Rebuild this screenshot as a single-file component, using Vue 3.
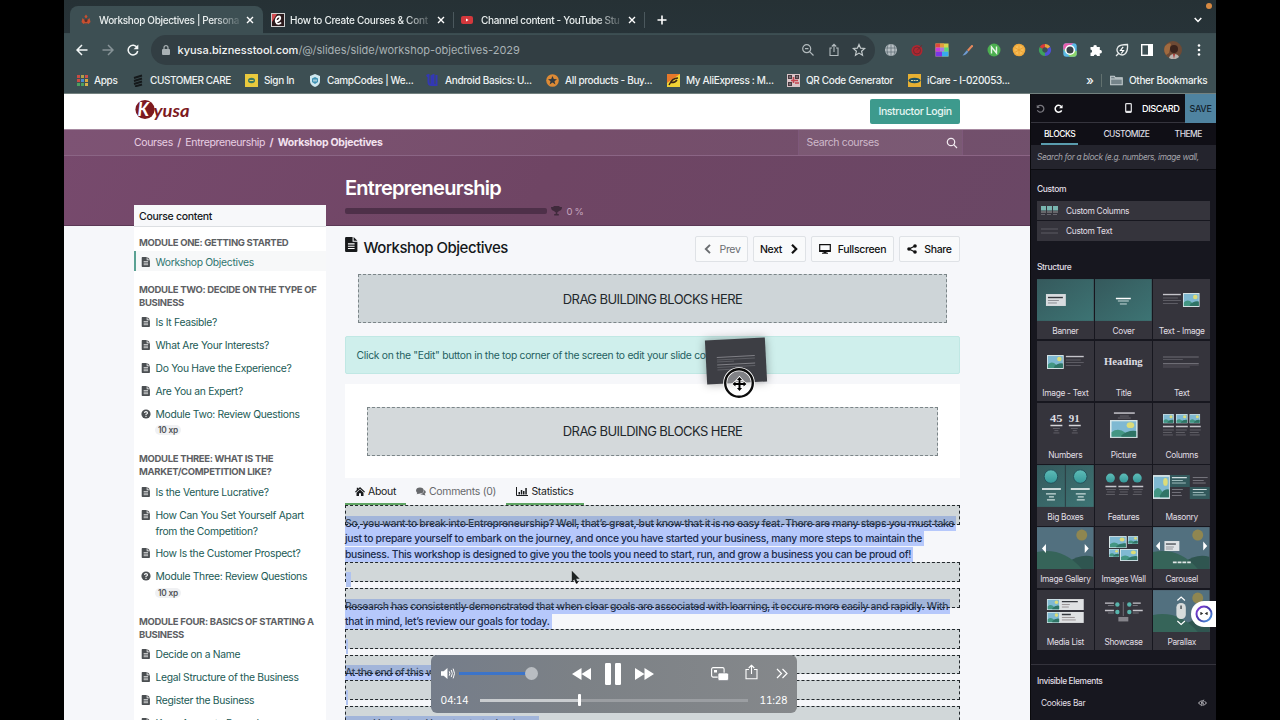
<script setup>
const bookmarks = [
  { icon: 'apps', text: 'Apps' },
  { icon: 'stack', text: 'CUSTOMER CARE' },
  { icon: 'mtn', text: 'Sign In' },
  { icon: 'shield', text: 'CampCodes | We...' },
  { icon: 'udacity', text: 'Android Basics: U...' },
  { icon: 'badge', text: 'All products - Buy...' },
  { icon: 'ali', text: 'My AliExpress : M...' },
  { icon: 'qr', text: 'QR Code Generator' },
  { icon: 'mtn2', text: 'iCare - I-020053...' },
]

const modules = [
  { title: ['MODULE ONE: GETTING STARTED'], items: [{ t: ['Workshop Objectives'], active: true }] },
  {
    title: ['MODULE TWO: DECIDE ON THE TYPE OF', 'BUSINESS'],
    items: [
      { t: ['Is It Feasible?'] },
      { t: ['What Are Your Interests?'] },
      { t: ['Do You Have the Experience?'] },
      { t: ['Are You an Expert?'] },
      { t: ['Module Two: Review Questions'], quiz: true },
    ],
  },
  {
    title: ['MODULE THREE: WHAT IS THE', 'MARKET/COMPETITION LIKE?'],
    items: [
      { t: ['Is the Venture Lucrative?'] },
      { t: ['How Can You Set Yourself Apart', 'from the Competition?'] },
      { t: ['How Is the Customer Prospect?'] },
      { t: ['Module Three: Review Questions'], quiz: true },
    ],
  },
  {
    title: ['MODULE FOUR: BASICS OF STARTING A', 'BUSINESS'],
    items: [
      { t: ['Decide on a Name'] },
      { t: ['Legal Structure of the Business'] },
      { t: ['Register the Business'] },
      { t: ['Keep Accurate Records'] },
    ],
  },
]

const blocks = [
  'Banner', 'Cover', 'Text - Image', 'Image - Text', 'Title', 'Text', 'Numbers', 'Picture', 'Columns',
  'Big Boxes', 'Features', 'Masonry', 'Image Gallery', 'Images Wall', 'Carousel', 'Media List', 'Showcase', 'Parallax',
]
</script>

<template>
  <div class="stage">
    <svg class="defs" aria-hidden="true">
      <defs>
        <linearGradient id="teal" x1="0" y1="0" x2="1" y2="1">
          <stop offset="0" stop-color="#35595c" /><stop offset="1" stop-color="#3d7474" />
        </linearGradient>
        <linearGradient id="orb" x1="0" y1="0" x2="0" y2="1">
          <stop offset="0" stop-color="#5fbdb8" /><stop offset="1" stop-color="#35999a" />
        </linearGradient>
        <linearGradient id="ring" x1="0" y1="0" x2="1" y2="1">
          <stop offset="0" stop-color="#8a3fe0" /><stop offset=".5" stop-color="#4437a8" /><stop offset="1" stop-color="#4aa6e8" />
        </linearGradient>
        <symbol id="photo" viewBox="0 0 17 14" preserveAspectRatio="none">
          <rect width="17" height="14" fill="#d9e8ea" />
          <rect x="1" y="1" width="15" height="12" fill="#7fb9d2" />
          <circle cx="12.5" cy="4" r="2.3" fill="#dcdc79" />
          <path d="M1 9.5Q5 5.500 9.500 10L16 9v4H1z" fill="#439683" />
          <path d="M7 12Q11 7.500 16 8.500V13H7z" fill="#2f7466" />
        </symbol>
        <symbol id="scene" viewBox="0 0 57 42" preserveAspectRatio="none">
          <rect width="57" height="42" fill="#52707f" />
          <circle cx="45" cy="8" r="5.500" fill="#8f8650" />
          <path d="M30 36Q44 26 57 30V42H30z" fill="#2f5550" />
          <path d="M0 25Q26 20 45 42H0z" fill="#366459" />
        </symbol>
        <symbol id="file" viewBox="0 0 12 14">
          <path d="M1 0h6v4.500h4.500V13a1 1 0 0 1-1 1H1a1 1 0 0 1-1-1V1a1 1 0 0 1 1-1z" fill="currentColor" />
          <path d="M8 0l3.500 3.600H8z" fill="currentColor" />
          <path d="M2.700 6.400h6.200M2.700 8.600h6.200M2.700 10.800h6.200" stroke="#fff" stroke-width="1" />
        </symbol>
        <symbol id="lines" viewBox="0 0 37 13">
          <path d="M0 1h36M0 7.500h36" stroke="#6e6d75" stroke-width="1.200" />
          <path d="M0 3.500h20M0 11h27M0 9h36" stroke="#56555d" stroke-width="1" />
        </symbol>
      </defs>
    </svg>

    <div class="screen">
      <div class="tabstrip">
        <div class="tab active">
          <svg class="fav" viewBox="0 0 12 12"><path d="M6 .5l1.600 2.300L6 4.600 4.400 2.800zM2.500 4l2 2 1.500-1 1.500 1 2-2 1 4-2 2-2-1.200L6 11 5.500 8.800 3.500 10l-2-2z" fill="#c94f2f" /><circle cx="6" cy="6.500" r="1.500" fill="#5b2b27" /></svg>
          <span class="tab-text t1">Workshop Objectives | Persona</span>
          <svg class="x" viewBox="0 0 8 8"><path d="M1 1l6 6M7 1L1 7" /></svg>
        </div>
        <div class="tab second">
          <svg class="fav big" viewBox="0 0 14 14"><rect width="14" height="14" fill="#cfcfcf" /><rect x="1" y="1" width="12" height="12" fill="#2c1a1c" /><path d="M1 1h5L1 9z" fill="#d24b50" /><path d="M5 8.500c5-1 5-5 3-5S4 6 5 9s4 2 5 .500" fill="none" stroke="#fff" stroke-width="1.800" /></svg>
          <span class="tab-text t2">How to Create Courses &amp; Cont</span>
          <svg class="x" viewBox="0 0 8 8"><path d="M1 1l6 6M7 1L1 7" /></svg>
        </div>
        <div class="tab third">
          <svg class="fav" viewBox="0 0 12 12"><rect y="2" width="12" height="8" rx="2" fill="#d3383c" /><path d="M5 4.400v3.200L7.600 6z" fill="#fff" /></svg>
          <span class="tab-text t3">Channel content - YouTube Stu</span>
          <svg class="x" viewBox="0 0 8 8"><path d="M1 1l6 6M7 1L1 7" /></svg>
        </div>
        <svg class="plus" viewBox="0 0 10 10"><path d="M5 .5v9M.5 5h9" stroke="#fff" stroke-width="1.600" /></svg>
        <svg class="chev" viewBox="0 0 8 6"><path d="M.7 1L4 4.500 7.300 1" fill="none" stroke="#fff" stroke-width="1.500" /></svg>
        <i class="rec"></i>
      </div>

      <div class="toolbar">
        <svg class="nav" viewBox="0 0 12 12"><path d="M11.500 6H1.200M6 1L1 6l5 5" /></svg>
        <svg class="nav dim" viewBox="0 0 12 12"><path d="M.5 6h10.300M6 1l5 5-5 5" /></svg>
        <svg class="nav" viewBox="0 0 12 12"><path d="M10.200 3.800A4.800 4.800 0 1 0 10.700 7" /><path d="M11.300.5v4.700H6.600z" class="solid" /></svg>
        <div class="omni">
          <svg class="lock" viewBox="0 0 8 10"><rect y="4" width="8" height="6" rx="1" fill="#a9b1b4" /><path d="M2 4.500V2.700a2 2 0 0 1 4 0v1.800" fill="none" stroke="#a9b1b4" stroke-width="1.200" /></svg>
          <span class="url"><b>kyusa.biznesstool.com</b>/@/slides/slide/workshop-objectives-2029</span>
        </div>
        <div class="exts">
          <svg viewBox="0 0 14 14"><g fill="none" stroke="#b2babd" stroke-width="1.200"><circle cx="5.700" cy="5.700" r="4" /><path d="M8.600 8.600L12.500 12.500M4 5.700h3.400" /></g></svg>
          <svg viewBox="0 0 14 14"><g fill="none" stroke="#b2babd" stroke-width="1.100"><path d="M5 5H3v7.500h8V5H9M7 9V1.500M4.800 3.500L7 1.300l2.200 2.200" /></g></svg>
          <svg viewBox="0 0 14 14"><path d="M7 1.500l1.600 3.700 4 .3-3 2.700.9 4L7 10.100l-3.500 2.100.9-4-3-2.700 4-.3z" fill="none" stroke="#c3cacc" stroke-width="1.200" /></svg>
          <svg viewBox="0 0 14 14"><circle cx="7" cy="7" r="6" fill="#b9c1c5" /><path d="M1 5h12M1 9h12M7 1v12M4 1.500Q2 7 4 12.500M10 1.500Q12 7 10 12.500" fill="none" stroke="#66757b" stroke-width=".8" /></svg>
          <svg viewBox="0 0 14 14"><circle cx="7" cy="7.500" r="5.500" fill="#b0262f" /><circle cx="7" cy="7.500" r="3.500" fill="none" stroke="#702a33" /><path d="M7 7.500l5-5.500" stroke="#702a33" /></svg>
          <svg viewBox="0 0 14 14"><rect x=".5" y=".5" width="13" height="13" fill="#d5d64e" /><path d="M.5.5H5v4H.5z" fill="#e0493c" /><path d="M5 .5h4v4H5z" fill="#e59a3e" /><path d="M.5 4.500H5v4H.5z" fill="#c83ddb" /><path d="M5 4.500h4.300v4H5z" fill="#a57be6" /><path d="M9.300 4.500h4.200v4H9.300z" fill="#58d97c" /><path d="M.5 8.500h6.500v5H.5z" fill="#7b35e8" /><path d="M7 8.500h6.500v5H7z" fill="#38a9ee" /></svg>
          <svg viewBox="0 0 14 14"><path d="M6 7L10.500 2Q12.500 1.500 12 3.500L7.500 8.500z" fill="#e4875c" /><path d="M5.800 7.200l1.600 1.600Q5 12.500 1.500 12.500z" fill="#6f9bd0" /></svg>
          <svg viewBox="0 0 14 14"><circle cx="7" cy="7" r="6.500" fill="#4caf50" /><path d="M4.500 10.500V4l5 6V3.500" fill="none" stroke="#e8f6e9" stroke-width="1.400" /></svg>
          <svg viewBox="0 0 14 14"><circle cx="7" cy="7" r="6.300" fill="#f0a83a" /><circle cx="7" cy="7" r="4.800" fill="#f6bc55" /><path d="M7 2.500v9M3 4.700l8 4.600M11 4.700L3 9.300" stroke="#e79b2c" stroke-width=".8" /></svg>
          <svg viewBox="0 0 14 14"><g fill="none" stroke-width="3.400"><path d="M7 2.600A4.400 4.400 0 0 1 10.800 4.800" stroke="#e8a13c" /><path d="M10.800 4.800A4.400 4.400 0 0 1 7 11.400" stroke="#4f4fd6" /><path d="M7 11.400A4.400 4.400 0 0 1 3.200 4.800" stroke="#3fa15c" /><path d="M3.200 4.800A4.400 4.400 0 0 1 7 2.600" stroke="#d93a3a" /></g></svg>
          <svg viewBox="0 0 14 14"><rect x=".3" y=".3" width="13.400" height="13.400" rx="3" fill="#5ab9e6" /><path d="M.3 7V3.300a3 3 0 0 1 3-3h7.400z" fill="#e85fae" /><path d="M.3 6.500L13.700 8v2.700a3 3 0 0 1-3 3H7z" fill="#8bd46a" /><circle cx="7" cy="7" r="4.300" fill="#39424a" stroke="#fff" stroke-width="1.500" /></svg>
          <svg viewBox="0 0 14 14"><path d="M1.500 4h3a1.700 1.700 0 1 1 3.300 0h3v3a1.700 1.700 0 1 1 0 3.300v2.700H8a1.600 1.600 0 0 0-3.200 0H1.500V9.800a1.600 1.600 0 0 0 0-3.200z" fill="#fff" /></svg>
          <svg viewBox="0 0 14 14"><path d="M12.500 1.500Q13 8 10.500 10.500A5 5 0 0 1 3 4Q5 1.500 12.500 1.500zM1 13l2.500-2.500" fill="none" stroke="#e8ecec" stroke-width="1.300" /><path d="M8.200 3.800L5.500 7.500h3L6.300 10.500" fill="none" stroke="#fff" stroke-width="1.200" /></svg>
          <svg viewBox="0 0 14 14"><rect x="1.700" y="1.700" width="10.600" height="10.600" fill="none" stroke="#fff" stroke-width="1.400" /><path d="M8 1.700h4.300v10.600H8z" fill="#fff" /></svg>
          <svg class="ava" viewBox="0 0 18 18"><circle cx="9" cy="9" r="9" fill="#6e4a35" /><path d="M2 14A9 9 0 0 1 1 5q4-4 6-2l-2 9z" fill="#a06a3f" /><circle cx="10" cy="8" r="4" fill="#3a231c" /><path d="M5 17q1-4 5-4t5 3q-5 4-10 1z" fill="#b9b3ae" /><path d="M9 13l1 5 1-5z" fill="#a33" /></svg>
          <svg viewBox="0 0 14 14"><g fill="#fff"><circle cx="7" cy="2.500" r="1.300" /><circle cx="7" cy="7" r="1.300" /><circle cx="7" cy="11.500" r="1.300" /></g></svg>
        </div>
      </div>

      <div class="bookmarks">
        <div v-for="b in bookmarks" :key="b.icon" class="bm" :class="b.icon">
          <svg viewBox="0 0 13 13">
            <template v-if="b.icon === 'apps'">
              <path d="M1 2.500h3M1 6.500h3" stroke="#c94b43" stroke-width="3" /><path d="M5 2.500h3" stroke="#b0a04a" stroke-width="3" /><path d="M9 2.500h3" stroke="#d0504a" stroke-width="3" /><path d="M5 6.500h3" stroke="#4a8ad0" stroke-width="3" /><path d="M9 6.500h3" stroke="#d9a33c" stroke-width="3" /><path d="M1 10.500h3M5 10.500h3" stroke="#4aa060" stroke-width="3" /><path d="M9 10.500h3" stroke="#d9b04a" stroke-width="3" />
            </template>
            <path v-else-if="b.icon === 'stack'" d="M1 4l8-2.500M1 7l8-2.500M1 10l8-2.500M2 12.500L9 10.500" stroke="#15191b" stroke-width="1.900" />
            <template v-else-if="b.icon === 'mtn'">
              <rect width="13" height="13" fill="#eac93d" /><ellipse cx="6.500" cy="6.500" rx="3.500" ry="2.800" fill="#3e7860" /><path d="M4.500 6.500h4" stroke="#e9d35c" />
            </template>
            <template v-else-if="b.icon === 'shield'">
              <path d="M1 2l5-2 5 2v5q0 4-5 6-5-2-5-6z" fill="#cfe8f0" /><path d="M3 4.500l3-1.500 3 1.500V8L6 10 3 8z" fill="#3f93b4" /><path d="M5 5.500v2M7 5.500v2" stroke="#fff" />
            </template>
            <path v-else-if="b.icon === 'udacity'" d="M1.500 2l2-1v7q0 3 3 3V2l2-1v10h3V1" fill="none" stroke="#3338b4" stroke-width="2" />
            <template v-else-if="b.icon === 'badge'">
              <circle cx="6.500" cy="6.500" r="6.300" fill="#dd8a35" /><path d="M6.500 2l1.300 3 3.200.2-2.500 2 .9 3.200-2.900-1.800-2.900 1.800.9-3.200-2.500-2L5.200 5z" fill="#323a40" />
            </template>
            <template v-else-if="b.icon === 'ali'">
              <rect width="13" height="13" fill="#f0d235" /><path d="M0 0h13L0 9z" fill="#e7782a" /><path d="M2 11Q5 4 11 4M3 8.500Q8 9 10 6" fill="none" stroke="#3a2417" stroke-width="1.400" />
            </template>
            <template v-else-if="b.icon === 'qr'">
              <rect width="13" height="13" fill="#d9c3c6" /><path d="M1 1h4v4H1zM8 1h4v4H8zM1 8h4v4H1z" fill="#4a3a40" /><path d="M2.500 2.500h1v1h-1zM9.500 2.500h1v1h-1zM2.500 9.500h1v1h-1z" fill="#fff" /><path d="M4 6.500h7M6.500 3v6M8 9h4" stroke="#c74650" stroke-width="1.600" />
            </template>
            <template v-else>
              <rect width="13" height="13" fill="#e6b032" /><ellipse cx="6.500" cy="6.500" rx="6" ry="2.800" fill="#1f4e60" /><path d="M3 6.500h7" stroke="#dcd9a0" stroke-width="1.200" stroke-dasharray="2 .6" />
            </template>
          </svg>
          <span>{{ b.text }}</span>
        </div>
        <span class="more">»</span>
        <div class="bm other">
          <svg viewBox="0 0 14 11"><path d="M.7 10V1h4l1 1.500h7.500V10zM.7 4h12.500" fill="#75848a" stroke="#c8d0d2" stroke-width="1.100" /></svg>
          <span>Other Bookmarks</span>
        </div>
      </div>

      <div class="body">
        <div class="page">
          <header class="site">
            <svg class="logo" viewBox="0 0 60 28">
              <circle cx="11" cy="10.500" r="9.600" fill="#7d1a1e" />
              <text x="3.500" y="17" class="k">K</text>
              <text x="19.500" y="18" class="yusa" textLength="36" lengthAdjust="spacingAndGlyphs">yusa</text>
            </svg>
            <a class="login">Instructor Login</a>
          </header>

          <section class="hero">
            <div class="crumbs">
              <div class="trail"><span>Courses</span><i>/</i><span>Entrepreneurship</span><i class="bold">/</i><b>Workshop Objectives</b></div>
              <div class="search">Search courses
                <svg viewBox="0 0 12 12"><circle cx="5" cy="5" r="3.700" fill="none" stroke="#f3ebf1" stroke-width="1.200" /><path d="M7.700 7.700l3.300 3.300" stroke="#f3ebf1" stroke-width="1.200" /></svg>
              </div>
            </div>
            <h1>Entrepreneurship</h1>
            <div class="progress">
              <i></i>
              <svg viewBox="0 0 11 10"><path d="M2.500 0h6v1H11q0 3.500-3 4-.7 1-1.700 1.300V8h1.500v1.500H3.200V8h1.500V6.300Q3.700 6 3 5 0 4.500 0 1h2.500z" fill="#402a3c" /></svg>
              <span>0 %</span>
            </div>
          </section>

          <div class="columns">
            <aside>
              <div class="aside-head">Course content</div>
              <div v-for="m in modules" :key="m.title[0]" class="module">
                <h3><span v-for="l in m.title" :key="l">{{ l }}</span></h3>
                <template v-for="it in m.items" :key="it.t[0]">
                  <div class="lesson" :class="{ current: it.active }">
                    <svg v-if="it.quiz" viewBox="0 0 10 10"><circle cx="5" cy="5" r="4.600" fill="#4b4f52" /><path d="M3.500 4Q3.600 2.600 5 2.600T6.500 4Q6.500 4.800 5 5.300v.8M5 6.800v1.200" fill="none" stroke="#fff" stroke-width="1.100" /></svg>
                    <svg v-else class="doc"><use href="#file" /></svg>
                    <div><span v-for="l in it.t" :key="l">{{ l }}</span></div>
                  </div>
                  <div v-if="it.quiz" class="xp"><span>10 xp</span></div>
                </template>
              </div>
            </aside>

            <main>
              <div class="titlebar">
                <svg class="bigdoc"><use href="#file" /></svg>
                <h2>Workshop Objectives</h2>
                <a class="btn prev"><svg viewBox="0 0 10 10"><path d="M7 .8L2.800 5 7 9.200" fill="none" stroke="currentColor" stroke-width="1.900" /></svg>Prev</a>
                <a class="btn next">Next<svg viewBox="0 0 10 10"><path d="M3 .8L7.200 5 3 9.200" fill="none" stroke="currentColor" stroke-width="2.200" /></svg></a>
                <a class="btn full"><svg viewBox="0 0 12 10"><path d="M.7.700h10.600v6.600H.7z" fill="none" stroke="currentColor" stroke-width="1.200" /><path d="M.5 6h11v1.500h-11zM4.500 7h3v1.700H9v1H3v-1h1.500z" fill="currentColor" /></svg>Fullscreen</a>
                <a class="btn share"><svg viewBox="0 0 10 10"><path d="M8 2L2 5l6 3" fill="none" stroke="currentColor" stroke-width="1.300" /><g fill="currentColor"><circle cx="8" cy="2" r="1.800" /><circle cx="2" cy="5" r="1.800" /><circle cx="8" cy="8" r="1.800" /></g></svg>Share</a>
              </div>
              <div class="drop one">DRAG BUILDING BLOCKS HERE</div>
              <div class="alert">Click on the "Edit" button in the top corner of the screen to edit your slide content.</div>
              <div class="canvas"><div class="drop two">DRAG BUILDING BLOCKS HERE</div></div>
              <nav class="tabs">
                <a class="on about"><svg viewBox="0 0 10 9"><path d="M5 0L10 4.700 9.200 5.500 5 1.700.8 5.500 0 4.700 1.800 3V.8h1.500v1zM5 2.600l3.500 3.100V9H6V6.300H4V9H1.500V5.700z" fill="currentColor" /></svg>About</a>
                <a class="cmt"><svg viewBox="0 0 11 9"><ellipse cx="4.300" cy="3.300" rx="4.200" ry="3.200" fill="currentColor" /><path d="M2 5l-1.300 2.500L5 6.300z" fill="currentColor" /><path d="M9.200 2.500q3 2.500.3 4.500l1 1.800L7.500 8Q5.500 8 4.500 7.200 9 7 9.200 2.500z" fill="currentColor" /></svg>Comments (0)</a>
                <a class="on stats"><svg viewBox="0 0 12 9"><path d="M.5 0v8.500H12" fill="none" stroke="currentColor" /><path d="M2.500 5H4v2.500H2.500zM4.800 3h1.500v4.500H4.800zM7 4h1.500v3.500H7zM9.300 1h1.500v6.500H9.300z" fill="currentColor" /></svg>Statistics</a>
              </nav>
              <div class="article">
                <div class="zone"></div>
                <p class="over"><mark class="l1">So, you want to break into Entrepreneurship? Well, that’s great, but know that it is no easy feat. There are many steps you must take</mark><mark class="l2">just to prepare yourself to embark on the journey, and once you have started your business, many more steps to maintain the</mark><mark class="l3">business. This workshop is designed to give you the tools you need to start, run, and grow a business you can be proud of!</mark></p>
                <div class="zone z2"><i class="sliver"></i></div>
                <div class="zone z3"></div>
                <p class="over"><mark class="l4">Research has consistently demonstrated that when clear goals are associated with learning, it occurs more easily and rapidly. With</mark><mark class="l5">that in mind, let’s review our goals for today.</mark></p>
                <div class="zone z4"><i class="sliver thin"></i></div>
                <div class="zone z5"></div>
                <p class="over short"><mark class="l6">At the end of this workshop, you should be able to:</mark></p>
                <div class="zone z6"><i class="sliver thin"></i></div>
                <div class="zone z7"></div>
                <p class="over last"><mark class="l7">Understand how to start a business</mark></p>
              </div>
            </main>
          </div>
        </div>

        <div class="editor">
          <div class="ed-top">
            <svg viewBox="0 0 10 10" class="undo"><path d="M2 2.800A3.800 3.800 0 1 1 1.500 7" fill="none" stroke="#77767d" stroke-width="1.400" /><path d="M.8.800v3.600h3.600z" fill="#77767d" /></svg>
            <svg viewBox="0 0 10 10" class="redo"><path d="M8 2.800A3.800 3.800 0 1 0 8.500 7" fill="none" stroke="#fff" stroke-width="1.700" /><path d="M9.500.800v3.900H5.600z" fill="#fff" /></svg>
            <svg viewBox="0 0 7 10" class="phone"><rect x=".7" y=".7" width="5.600" height="8.600" rx=".8" fill="none" stroke="#e5e5e8" stroke-width="1.200" /><path d="M1 8.500h5" stroke="#e5e5e8" stroke-width="1.400" /></svg>
            <span class="discard">DISCARD</span><span class="save">SAVE</span>
          </div>
          <div class="ed-tabs"><span class="sel">BLOCKS</span><span>CUSTOMIZE</span><span>THEME</span></div>
          <div class="ed-search">Search for a block (e.g. numbers, image wall,</div>
          <div class="ed-body">
            <h4>Custom</h4>
            <div class="custom">
              <svg viewBox="0 0 18 10"><g fill="#79b5b0"><path d="M0 0h5v4.500H0zM6 0h5v4.500H6zM12 0h5v4.500h-5z" /></g><path d="M0 6h17" stroke="#999" stroke-dasharray="5 1" /><path d="M0 8.500h17" stroke="#66656d" stroke-dasharray="4 2" /></svg>Custom Columns
            </div>
            <div class="custom">
              <svg viewBox="0 0 18 10"><path d="M0 3h17M0 7h17" stroke="#5c5b63" /></svg>Custom Text
            </div>
            <h4 class="structure">Structure</h4>
            <div class="grid">
              <div v-for="b in blocks" :key="b" class="cell">
                <svg viewBox="0 0 57 42">
                  <template v-if="b === 'Banner'"><rect width="57" height="42" fill="url(#teal)" /><rect x="9" y="15" width="20" height="12" fill="#d8dcdf" /><path d="M11 18.500h15" stroke="#34373c" stroke-width="1.400" /><path d="M11 21.500h11M11 24h9" stroke="#8a8d92" /></template>
                  <template v-else-if="b === 'Cover'"><rect width="57" height="42" fill="url(#teal)" /><path d="M21 19.500h15" stroke="#fff" stroke-width="1.500" /><path d="M23 22h11M25 25h7" stroke="#c9dcdc" /></template>
                  <template v-else-if="b === 'Text - Image'"><path d="M10 15.500h18" stroke="#c5c4ca" stroke-width="1.400" /><path d="M10 19h15M10 21.500h18M10 24.500h15" stroke="#5f5e66" /><use href="#photo" x="30" y="14" width="17" height="14" /></template>
                  <template v-else-if="b === 'Image - Text'"><use href="#photo" x="10" y="14" width="17" height="14" /><path d="M29 15.500h18" stroke="#c5c4ca" stroke-width="1.400" /><path d="M29 19h15M29 21.500h18M29 24.500h15" stroke="#5f5e66" /></template>
                  <text v-else-if="b === 'Title'" x="9" y="24.500" class="serif" textLength="39" lengthAdjust="spacingAndGlyphs">Heading</text>
                  <use v-else-if="b === 'Text'" href="#lines" x="10" y="15" width="37" height="13" />
                  <template v-else-if="b === 'Numbers'"><text x="13" y="18.500" class="serif" textLength="12.500" lengthAdjust="spacingAndGlyphs">45</text><text x="32" y="18.500" class="serif" textLength="11" lengthAdjust="spacingAndGlyphs">91</text><path d="M13.500 22.500h12M32 22.500h12" stroke="#d4d3d8" stroke-width="1.300" /><path d="M16 25.500h7M17.500 27.700h4M16.500 30h6M34 25.500h7M36 27.700h4M35 30h6" stroke="#66656d" stroke-width=".9" /></template>
                  <template v-else-if="b === 'Picture'"><path d="M19 10h21" stroke="#c5c4ca" stroke-width="1.500" /><path d="M25 13h9M23 15h13" stroke="#66656d" /><use href="#photo" x="15" y="17" width="28" height="18" /></template>
                  <template v-else-if="b === 'Columns'"><use href="#photo" x="10" y="11" width="11" height="9.500" /><use href="#photo" x="23" y="11" width="12" height="9.500" /><use href="#photo" x="36.500" y="11" width="11" height="9.500" /><path d="M10 23.500h11M23 23.500h12M37 23.500h11" stroke="#c5c4ca" stroke-width="1.400" /><path d="M10 27h11M23 27h11M37 27h11M10 29.500h9M23 29.500h9M37 29.500h9M10 32h10M23 32h10M37 32h10" stroke="#66656d" stroke-width=".9" /></template>
                  <template v-else-if="b === 'Big Boxes'"><rect width="57" height="42" fill="url(#teal)" /><path d="M28.500 0v42" stroke="#2b3a41" /><circle cx="14" cy="11.500" r="6.800" fill="url(#orb)" stroke="#24525a" /><circle cx="43.500" cy="11.500" r="6.800" fill="url(#orb)" stroke="#24525a" /><path d="M5 24h19M34 24h19" stroke="#fff" stroke-width="1.600" /><path d="M9 29h10M12 32h5M10 35h8M39 29h10M41 32h6M40 35h8" stroke="#c9dcdc" stroke-width="1.300" /></template>
                  <template v-else-if="b === 'Features'"><circle cx="15.500" cy="13" r="4.500" fill="url(#orb)" /><circle cx="29" cy="13" r="4.500" fill="url(#orb)" /><circle cx="42.500" cy="13" r="4.500" fill="url(#orb)" /><path d="M10.500 21.500h11M23.500 21.500h11M37.500 21.500h11" stroke="#c5c4ca" stroke-width="1.300" /><path d="M11 24.500h10M24 24.500h10M38 24.500h10M12 27h8M25 27h8M39 27h8M11 29.500h9M24 29.500h9M38 29.500h9" stroke="#66656d" stroke-width=".9" /></template>
                  <template v-else-if="b === 'Masonry'"><path d="M17 10h20v12H17zM37 22h20v12H37z" fill="#33595c" /><use href="#photo" x="0" y="10" width="17" height="24" /><path d="M19 12.500h15M40 24.500h14" stroke="#cfdedf" stroke-width="1.200" /><path d="M19 15.500h11M19 18h14M40 27.500h11M40 30h13" stroke="#9fbcbc" /><path d="M40 12.500h15M40 15.500h11M40 18h13M19 24.500h11M19 27.500h9M19 30.500h10" stroke="#77767e" /></template>
                  <template v-else-if="b === 'Image Gallery'"><use href="#scene" width="57" height="42" /><path d="M9 17v9l-4-4.500zM48 17v9l4-4.500z" fill="#fff" /></template>
                  <template v-else-if="b === 'Images Wall'"><use href="#photo" x="14" y="9" width="18" height="12" /><use href="#photo" x="33" y="9" width="10.500" height="8" /><use href="#photo" x="14" y="22" width="10.500" height="8" /><use href="#photo" x="25" y="22" width="18.500" height="12" /></template>
                  <template v-else-if="b === 'Carousel'"><use href="#scene" width="57" height="42" /><rect x="11.500" y="14" width="15" height="10" fill="#dfe3e6" /><path d="M13 17h10" stroke="#43474d" stroke-width="1.300" /><path d="M13 20h8M13 22h7" stroke="#8a8d92" stroke-width=".9" /><path d="M7 14.500v9l-4-4.500zM50.500 14.500v9l4-4.500z" fill="#fff" /><path d="M20 35.500h18" stroke="#dfe6e6" stroke-width="1.600" stroke-dasharray="3.800 1" /></template>
                  <template v-else-if="b === 'Media List'"><g><rect x="10" y="9" width="37" height="11" fill="#dfe1e3" /><rect x="10" y="22" width="37" height="11" fill="#dfe1e3" /><use href="#photo" x="10" y="9" width="13" height="11" /><use href="#photo" x="10" y="22" width="13" height="11" /></g><path d="M25 11.500h16M25 24.500h9" stroke="#34373c" stroke-width="1.300" /><path d="M25 14.500h8M25 17h7M25 27.500h13M25 30h14" stroke="#9a9395" /></template>
                  <template v-else-if="b === 'Showcase'"><path d="M28.500 12v14" stroke="#66656d" stroke-width="1.200" /><g fill="#58b4ac"><circle cx="22.500" cy="14.500" r="2.200" /><circle cx="22.500" cy="22" r="2.200" /><circle cx="34.500" cy="14.500" r="2.200" /><circle cx="34.500" cy="22" r="2.200" /></g><path d="M10 13h9M10 20.500h9M38 13h8M38 20.500h10" stroke="#c5c4ca" stroke-width="1.300" /><path d="M13 15.500h6M13 23h6M38 15.500h5M38 23h6" stroke="#77767e" /><rect x="23.500" y="27" width="10" height="4.500" fill="#85848b" /></template>
                  <template v-else><use href="#scene" width="57" height="42" /><rect x="23.500" y="13" width="9.500" height="16" rx="4.500" fill="#d8dcdc" /><path d="M28.200 15.500v3.500" stroke="#41484c" stroke-width="1.400" /><path d="M24.500 10.500l3.800-3.500 3.800 3.500M24.500 31l3.800 3.500 3.800-3.500" fill="none" stroke="#fff" stroke-width="1.200" /></template>
                </svg>
                <span>{{ b }}</span>
              </div>
            </div>
          </div>
          <div class="ed-foot">
            <h5>Invisible Elements</h5>
            <div class="cookies">Cookies Bar
              <svg viewBox="0 0 10 8"><path d="M.5 4Q5-1 9.500 4 5 9 .5 4z" fill="none" stroke="#c9c8ce" /><circle cx="5" cy="4" r="1.700" fill="#c9c8ce" /><path d="M7 .5L3.500 7.500" stroke="#1a1a22" stroke-width="1.500" /><path d="M6.500.3L3.500 7.500" stroke="#c9c8ce" stroke-width=".8" /></svg>
            </div>
          </div>
        </div>
      </div>
    </div>

    <div class="ghost"><svg viewBox="0 0 60 44"><path d="M11 17.500h38M11 25h38" stroke="#85868b" stroke-width=".9" /><path d="M11 20h38M11 27.500h38M11 22h17M11 30h28" stroke="#66676d" stroke-width=".8" /></svg></div>
    <svg class="move" viewBox="0 0 32 32">
      <circle cx="16" cy="16" r="13.800" fill="#fff" fill-opacity=".35" stroke="#fff" stroke-width="4" /><circle cx="16" cy="16" r="13.800" fill="none" stroke="#0b0b0b" stroke-width="2.400" />
      <path d="M16.500 10l2.600 3h-1.600v3h3v-1.600l3 2.600-3 2.600V18h-3v3h1.600l-2.600 3-2.600-3h1.600v-3h-3v1.600l-3-2.600 3-2.600V16h3v-3h-1.600z" fill="#000" stroke="#fff" stroke-width="1.600" paint-order="stroke" />
    </svg>
    <svg class="pointer" viewBox="0 0 10 15"><path d="M.8.800v11l2.500-2.300 1.800 4.200 1.900-.8-1.800-4.100h3.500z" fill="#000" stroke="#fff" stroke-width="1" paint-order="stroke" /></svg>

    <div class="player">
      <div class="row">
        <svg class="vol" viewBox="0 0 13 12"><path d="M0 4h2.500L6 1v10L2.500 8H0z" fill="#fff" /><path d="M7.700 4q1 2 0 4M9.500 2.700q2 3.300 0 6.600M11.300 1.500q2.500 4.500 0 9" fill="none" stroke="#fff" stroke-width=".9" /></svg>
        <div class="volbar"><i></i></div>
        <svg class="rw" viewBox="0 0 19 12"><path d="M9.500 0v12L0 6zM19 0v12L9.500 6z" fill="#fff" /></svg>
        <svg class="pause" viewBox="0 0 16 22"><rect width="6" height="22" rx="1.200" fill="#fff" /><rect x="10" width="6" height="22" rx="1.200" fill="#fff" /></svg>
        <svg class="rw" viewBox="0 0 19 12"><path d="M9.500 0v12L19 6zM0 0v12L9.500 6z" fill="#fff" /></svg>
        <svg class="pip" viewBox="0 0 18 14"><rect x=".6" y=".6" width="12.500" height="9.500" rx="1.500" fill="none" stroke="#fff" stroke-width="1.100" /><path d="M3 3h3v2.500H3z" fill="#fff" /><rect x="7" y="6" width="10.500" height="7.500" rx="1.500" fill="#fff" stroke="#7c8087" stroke-width=".6" /></svg>
        <svg class="out" viewBox="0 0 13 15"><path d="M4 5H1v9.300h11V5H9M6.500 9.500V1M3.700 3.500L6.500.8l2.800 2.700" fill="none" stroke="#fff" stroke-width="1.100" /></svg>
        <svg class="fwd" viewBox="0 0 12 10"><path d="M1 .5L5.500 5 1 9.500M6.500.5L11 5 6.500 9.500" fill="none" stroke="#fff" stroke-width="1.200" /></svg>
      </div>
      <div class="row time"><span>04:14</span><div class="seek"><i></i></div><span>11:28</span></div>
    </div>

    <div class="bot"><svg viewBox="0 0 18 18"><circle cx="9" cy="9" r="7.500" fill="none" stroke="url(#ring)" stroke-width="2" /><path d="M5.500 7.500l1.500 1-1.500 1M12.500 7.500l-1.500 1 1.500 1" fill="#222" stroke="#222" stroke-width="1.300" /></svg></div>
  </div>
</template>

<style>
body { background: #000; overflow: hidden; }
</style>

<style scoped>
* { box-sizing: border-box; }
h1, h2, h3, h4, h5, p { margin: 0; font-weight: 500; }
svg { display: block; flex: none; }
.stage { position: relative; width: 1280px; height: 720px; overflow: hidden; background: #000; padding: 0 64px; font-family: Inter, "Liberation Sans", sans-serif; font-size: 10px; color: #14181b; white-space: nowrap; }
.defs { position: absolute; width: 0; height: 0; }
.screen { width: 1152px; height: 720px; display: flex; flex-direction: column; }

.tabstrip { height: 34px; flex: none; background: linear-gradient(#263135, #273338); display: flex; align-items: center; padding: 6px 0 0 6px; position: relative; border-bottom: 1px solid #3b4c50; }
.tab { display: flex; align-items: center; color: #e9eeee; height: 28px; font-weight: 500; }
.tab.active { width: 193px; background: #3d4f53; border-radius: 8px 8px 0 0; padding-left: 10px; height: 28px; align-self: flex-start; }
.tab.second { width: 191px; padding-left: 8px; border-right: 1px solid #4b585d; height: 16px; }
.tab.third { width: 191px; padding-left: 7px; border-right: 1px solid #4b585d; height: 16px; }
.fav { width: 12px; height: 12px; margin-right: 7px; }
.fav.big { width: 14px; height: 14px; margin-right: 5px; }
.third .fav { margin-right: 8px; }
.tab-text { width: 140px; font-size: 10px; letter-spacing: -.35px; -webkit-mask-image: linear-gradient(90deg, #000 82%, rgba(0, 0, 0, .15)); mask-image: linear-gradient(90deg, #000 82%, rgba(0, 0, 0, .15)); }
.t2 { letter-spacing: -.27px; }
.x { width: 8px; height: 8px; margin-left: 7px; stroke: #fff; stroke-width: 1.400; }
.plus { width: 10px; height: 10px; margin-left: 12px; }
.chev { width: 8px; height: 6px; margin-left: auto; margin-right: 14px; }
.rec { position: absolute; right: 4px; top: 3px; width: 6px; height: 6px; border-radius: 50%; background: #d78a42; }

.toolbar { height: 33px; flex: none; background: #3d4f53; display: flex; align-items: center; padding: 0 0 1px 12px; }
.nav { width: 12px; height: 12px; margin-right: 13.500px; fill: none; stroke: #f4f7f7; stroke-width: 1.500; }
.nav.dim { stroke: #879397; }
.nav .solid { fill: #f4f7f7; stroke: none; }
.omni { width: 724px; height: 30px; border-radius: 15px; background: #323e43; display: flex; align-items: center; padding-left: 11px; margin-left: -2px; margin-right: -85px; flex: none; }
.lock { width: 8px; height: 10px; margin-right: 8px; }
.url { font-size: 11px; color: #a9b2b5; letter-spacing: -.01px; }
.url b { font-weight: 500; color: #f2f4f4; }
.exts { display: grid; grid-template-columns: repeat(3, 25.600px) 31.700px repeat(12, 25.650px); justify-items: end; align-items: center; flex: none; }
.exts svg { width: 14px; height: 14px; }
.exts svg.ava { width: 18px; height: 18px; margin-right: -2px; }

.bookmarks { height: 27px; flex: none; background: #3d4f53; border-bottom: 1px solid #73817f; display: grid; grid-template-columns: 57px 112px 64px 116px 121px 121px 120px 121px 178px 23px 100px; align-items: center; padding-left: 12px; color: #eef2f2; font-size: 10px; font-weight: 500; letter-spacing: -.34px; }
.bm { display: flex; align-items: center; gap: 6px; }
.bm.apps, .bm.shield { gap: 5px; }
.bm.stack { gap: 4px; letter-spacing: -.4px; }
.bm.udacity { gap: 7px; }
.bm svg { width: 13px; height: 13px; }
.other { border-left: 1px solid #62716f; padding-left: 8px; height: 13px; margin-left: -8px; }
.more { font-size: 13px; }

.body { flex: 1; display: flex; min-height: 0; }
.page { width: 966px; background: #f6f7fa; overflow: hidden; }
.site { height: 35px; background: #fff; display: flex; justify-content: space-between; padding: 0 70px; align-items: center; }
.logo { width: 60px; height: 28px; margin-top: 2px; }
.k { font: italic 700 18px Lato, sans-serif; fill: #fff; }
.yusa { font: italic 700 17px Lato, sans-serif; fill: #7d1a1e; }
.login { background: #3d9a8d; color: #e6f5f2; height: 25px; width: 90px; border-radius: 2px; font-size: 10.500px; letter-spacing: -.38px; display: flex; align-items: center; justify-content: center; font-weight: 500; }

.hero { height: 97px; background: linear-gradient(120deg, #774a6d 0%, #6f4564 50%, #6a4765 100%); border-top: 1px solid #a78aa1; border-bottom: 1px solid #5b3855; color: #fff; }
.crumbs { height: 26px; padding: 0 67px 0 70px; display: flex; justify-content: space-between; align-items: stretch; border-bottom: 1px solid #8b6585; background: rgba(255, 255, 255, .05); }
.trail { display: flex; align-items: center; gap: 4.500px; font-size: 10.500px; color: #e9cfe3; letter-spacing: -.36px; }
.trail i { font-style: normal; font-weight: 500; }
.trail .bold { font-weight: 700; }
.trail b { color: #f3e3ef; font-weight: 700; letter-spacing: -.28px; }
.search { width: 165px; background: rgba(255, 255, 255, .06); border: solid #7e587a; border-width: 0 1px; color: #cfb9cb; display: flex; align-items: center; justify-content: space-between; padding: 0 4px 0 7.500px; font-size: 10.500px; letter-spacing: -.36px; }
.search svg { width: 12px; height: 12px; }
.hero h1 { margin: 20px 0 0 281px; font-size: 20px; line-height: 24px; font-weight: 600; letter-spacing: -.74px; }
.progress { display: flex; align-items: center; margin: 5px 0 0 281px; height: 12px; font-size: 9.500px; letter-spacing: -.3px; color: #c6a5bf; }
.progress i { width: 202px; height: 6px; border-radius: 2px; background: #4e3049; }
.progress svg { width: 11px; height: 10px; margin: 0 4.500px 0 4px; }

.columns { display: grid; grid-template-columns: 192px 615px; column-gap: 19px; padding-left: 70px; height: 494px; }
aside { background: #fff; margin-top: -21px; height: 540px; position: relative; }
.aside-head { height: 22px; background: #f7f8fa; border-bottom: 1px solid #dcdfe2; padding-left: 5px; line-height: 23px; font-size: 10.500px; font-weight: 500; letter-spacing: -.3px; color: #15181a; }
.module { padding-top: 11px; }
.module + .module { padding-top: 11.500px; }
.module:nth-child(2) { padding-top: 9px; }
.module:nth-child(n+4) { padding-top: 17.500px; }
.module h3 { padding-left: 5px; font-size: 9.500px; line-height: 13px; font-weight: 700; letter-spacing: -.32px; color: #5d6063; margin-bottom: 2px; }
.module h3 span, .lesson span { display: block; }
.lesson { display: flex; align-items: flex-start; padding: 3.400px 0 3.400px 7px; line-height: 16px; font-size: 10.300px; letter-spacing: -.29px; color: #215a55; }
.lesson.current { background: #f7f8f9; border-left: 2px solid #5aa193; padding: 2.700px 0 1.800px 5px; color: #2f7670; }
.lesson svg { width: 10px; height: 10px; margin: 3px 4.500px 0 0; color: #4b4f52; }
.xp { height: 10px; padding-left: 21px; line-height: 10px; }
.xp span { display: inline-block; position: relative; top: -1px; background: #f0f1f3; border-radius: 6px; padding: 0 3px; font-size: 8.300px; letter-spacing: -.2px; font-weight: 600; color: #53565a; }

.titlebar { display: flex; align-items: center; margin-top: 10px; height: 26px; }
.bigdoc { width: 13px; height: 15px; margin: -9px 5.500px 0 0; color: #17191b; }
.titlebar h2 { font-size: 15px; font-weight: 500; margin-top: -4px; letter-spacing: -.47px; width: 331.500px; }
.btn { height: 26px; border: 1px solid #dfe2e6; border-radius: 2px; background: #f9fafb; display: flex; align-items: center; justify-content: center; font-size: 10.500px; letter-spacing: -.33px; font-weight: 500; margin-left: 5px; color: #111; gap: 7px; flex: none; }
.btn svg { width: 10px; height: 10px; }
.prev { width: 53px; color: #6a6d70; margin-left: 0; font-weight: 400; }
.next { width: 53px; }
.full { width: 83px; }
.full svg { width: 12px; }
.share { width: 61px; }

.drop { border: 1px dashed #7b8588; background: #ced5d8; color: #1f282c; height: 49px; display: flex; align-items: center; justify-content: center; font-size: 13px; letter-spacing: -.58px; }
.drop.one { margin: 12px 13px 0; }
.alert { margin-top: 13px; height: 38px; border: 1px solid #c0e8e4; border-radius: 2px; background: #cfefec; color: #245f61; font-size: 10.300px; letter-spacing: -.28px; line-height: 36px; padding-left: 10.500px; }
.canvas { margin-top: 10px; background: #fff; height: 94px; padding: 23px 22px; }
.canvas .drop { background: #d4d9db; padding-bottom: 1px; }
.tabs { height: 27px; display: flex; font-size: 10.500px; letter-spacing: -.3px; }
.tabs a { display: flex; align-items: center; gap: 3px; color: #67696c; border-bottom: 2px solid transparent; justify-content: center; padding-top: 1px; }
.tabs a.on { color: #191b1d; border-color: #5fa463; }
.tabs svg { width: 10px; height: 9px; }
.tabs .about { width: 61px; }
.tabs .cmt { width: 100px; }
.tabs .stats { width: 78px; }
.tabs .stats svg { width: 12px; }

.zone { height: 19.500px; border: 1px dashed #22282c; background: rgba(110, 130, 130, .27); position: relative; z-index: 1; }
.over { margin-top: -9px; font-size: 10.300px; line-height: 15.500px; letter-spacing: -.3px; color: #1a2c4c; }
.over mark { display: block; width: max-content; background: #b6c8fb; color: inherit; height: 15px; margin-bottom: .5px; padding-right: 2px; }
.over .l1 { letter-spacing: -.275px; }
.over .l2 { letter-spacing: -.297px; }
.over .l3, .over .l4 { letter-spacing: -.305px; }
.over .l5 { letter-spacing: -.26px; }
.over .l7 { padding-left: 28px; width: 194px; }
.z2 { margin-top: 0; }
.z3, .z7 { margin-top: 6.500px; }
.z4 { margin-top: -.5px; }
.z5 { margin-top: 6px; }
.z6 { margin-top: -.5px; }
.over.short { height: 15.500px; }
.over.last { margin-top: -9.500px; }
.sliver { position: absolute; left: 0; top: 9px; width: 5px; height: 15px; background: #b0c3f0; }
.sliver.thin { width: 2px; }

.editor { width: 186px; background: #17171f; border-left: 1px solid #0a0a0d; color: #e0dfe4; font-size: 8.400px; letter-spacing: -.32px; }
.ed-top { height: 29px; background: #100f16; display: flex; align-items: center; padding-left: 5px; border-bottom: 1px solid #35343d; font-weight: 500; color: #fff; }
.ed-top .undo { width: 9px; height: 9px; margin-right: 9px; }
.ed-top .redo { width: 9px; height: 9px; margin-right: 62px; }
.phone { width: 7px; height: 10px; margin-right: 10px; }
.discard { width: 43px; font-size: 9.200px; letter-spacing: -.48px; }
.save { flex: 1; align-self: stretch; background: #4f83a0; color: #12212c; display: flex; align-items: center; justify-content: center; font-size: 9px; margin-bottom: -1px; }
.ed-tabs { height: 22px; background: #100f16; display: flex; justify-content: space-between; align-items: stretch; padding: 0 14px 0 10px; line-height: 22px; font-size: 8.500px; letter-spacing: -.5px; font-weight: 500; color: #dcdbe0; }
.ed-tabs .sel { border-bottom: 2px solid #5a9cae; padding: 0 3px; color: #fff; }
.ed-search { height: 25px; background: #24242d; border-bottom: 1px solid #0c0c11; padding-left: 6px; line-height: 25px; font-size: 8.300px; font-style: italic; letter-spacing: -.37px; color: #a3a2a9; }
.ed-body { padding: 0 6px; }
h4 { font-size: 8.500px; letter-spacing: -.38px; line-height: 12px; margin: 12.500px 0 6.500px; font-weight: 500; }
h4.structure { margin: 20px 0 6px; }
.custom { height: 19.300px; background: #35343c; margin-bottom: 1px; display: flex; align-items: center; gap: 7px; padding-left: 4px; }
.custom svg { width: 18px; height: 10px; }
.grid { display: grid; grid-template-columns: repeat(3, 56.700px); gap: 1.500px; }
.cell { background: #35343c; height: 60.700px; }
.cell svg { width: 56.700px; height: 42px; }
.cell span { display: block; text-align: center; line-height: 20px; }
.serif { font: 700 11px "Liberation Serif", serif; letter-spacing: 0; fill: #dddce1; }
.ed-foot { border-top: 1px solid #34333c; margin-top: 13.500px; padding: 9px 6px; }
h5 { font-size: 8.400px; letter-spacing: -.36px; line-height: 14px; font-weight: 500; }
.cookies { display: flex; justify-content: space-between; align-items: center; padding: 8px 3px 0 4px; line-height: 14px; }
.cookies svg { width: 9px; height: 8px; }

.ghost { position: absolute; left: 706px; top: 339px; width: 60px; height: 44px; background: #3d3e44; transform: rotate(-3deg); box-shadow: 0 0 10px rgba(0, 0, 0, .35); }
.move { position: absolute; left: 723px; top: 367px; width: 32px; height: 32px; }
.pointer { position: absolute; left: 571px; top: 570px; width: 10px; height: 15px; }

.player { position: absolute; left: 431px; top: 655px; width: 366px; height: 58px; border-radius: 6px; background: linear-gradient(90deg, #757d8a, #7c8186 40%, #85888b); color: #fff; z-index: 3; padding: 0 9.500px; }
.row { display: flex; align-items: center; height: 37px; }
.row.time { height: 16px; font-size: 10.300px; letter-spacing: -.3px; font-variant-numeric: tabular-nums; }
.vol { width: 14px; height: 13px; margin-right: 4px; }
.volbar { width: 73px; height: 3px; background: #3c74c9; display: flex; align-items: center; justify-content: flex-end; margin-right: 40px; }
.volbar i { width: 13px; height: 13px; border-radius: 50%; background: #b9bdc2; margin-right: -6px; flex: none; }
.rw { width: 19px; height: 12px; }
.pause { width: 16px; height: 22px; margin: 0 14px; }
.pip { width: 18px; height: 14px; margin-left: 57px; }
.out { width: 13px; height: 16px; margin-left: 16px; margin-top: -3px; }
.fwd { width: 12px; height: 11px; margin-left: 18px; }
.time { justify-content: space-between; }
.seek { width: 268px; height: 3px; display: flex; align-items: center; background: linear-gradient(90deg, #c9cccf 37%, #9b9ea2 37%); }
.seek i { width: 3px; height: 12px; border-radius: 1px; background: #fff; margin-left: 98px; }
.bot { position: absolute; left: 1190.500px; top: 601px; width: 25.500px; height: 26px; border-radius: 13px 0 0 13px; background: #fff; padding: 4px; }
.bot svg { width: 18px; height: 18px; }
</style>
